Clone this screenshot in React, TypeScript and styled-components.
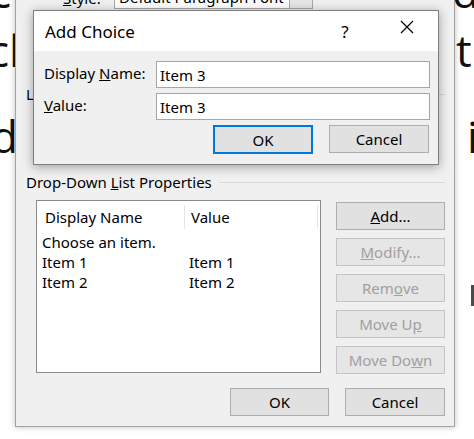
import React from 'react';
import styled, { createGlobalStyle } from 'styled-components';

const uiFont = `"Noto Sans", "Open Sans", "Liberation Sans", sans-serif`;

const GlobalStyle = createGlobalStyle`
    html, body {
        margin: 0;
        padding: 0;
        background: #fff;
    }
    * {
        box-sizing: border-box;
    }
`;

const Screen = styled.div`
    position: relative;
    width: 474px;
    height: 439px;
    overflow: hidden;
    background: #fff;
    font-family: ${uiFont};
`;

/* word document behind the dialogs */
const Document = styled.div`
    display: flex;
    flex-direction: column;
    font-family: "Open Sans", "Noto Sans", sans-serif;
    font-size: 44px;
    line-height: 44px;
    color: #111;
`;

const DocLine = styled.div<{ $gap: number }>`
    display: flex;
    justify-content: space-between;
    height: 44px;
    margin-top: ${({ $gap }) => $gap}px;
    white-space: nowrap;
`;

const DocLeft = styled.span<{ $shift: number }>`
    margin-left: ${({ $shift }) => $shift}px;
`;

const DocRight = styled.span<{ $pad: number }>`
    width: 22px;
    padding-left: ${({ $pad }) => $pad}px;
    overflow: visible;
`;

const Caret = styled.div`
    position: absolute;
    left: 471px;
    top: 285px;
    width: 3px;
    height: 21px;
    background: #4a4a4a;
`;

/* Content Control Properties dialog */
const OuterDialog = styled.div`
    position: absolute;
    left: 15px;
    top: -24px;
    width: 440px;
    height: 451px;
    display: flex;
    flex-direction: column;
    padding: 9px 9px 0 10px;
    background: #f0f0f0;
    border: 1px solid #a3a3a3;
    box-shadow: 0 0 6px rgba(0, 0, 0, 0.25);
    font-size: 15px;
    color: #000;
`;

const StyleRow = styled.div`
    display: flex;
    align-items: center;
    margin-left: 37px;
    height: 23px;
`;

const StyleLabel = styled.span`
    width: 51px;
`;

const Combo = styled.div`
    display: flex;
    width: 199px;
    height: 23px;
    background: #fff;
    border: 1px solid #a8a8a8;
`;

const ComboText = styled.span`
    flex: 1;
    padding-left: 4px;
    line-height: 21px;
    overflow: hidden;
    white-space: nowrap;
`;

const ComboButton = styled.span`
    width: 23px;
    border-left: 1px solid #a8a8a8;
    background: #e5e5e5;
    display: flex;
    align-items: center;
    justify-content: center;
`;

const GroupHeader = styled.div<{ $gap: number }>`
    display: flex;
    align-items: center;
    gap: 7px;
    height: 20px;
    margin-top: ${({ $gap }) => $gap}px;
    white-space: nowrap;
`;

const GroupLine = styled.span`
    flex: 1;
    height: 1px;
    background: #d9d9d9;
`;

const ListArea = styled.div`
    display: flex;
    margin-top: 8px;
    margin-left: 10px;
`;

const ListBox = styled.div`
    width: 285px;
    height: 173px;
    background: #fff;
    border: 1px solid #8a8a8a;
    padding-top: 4px;
`;

const ListHeader = styled.div`
    display: grid;
    grid-template-columns: 148px 133px;
    height: 24px;
    align-items: center;
    margin-bottom: 3px;
`;

const HeaderCell = styled.span<{ $pad: number }>`
    height: 100%;
    display: flex;
    align-items: center;
    padding-left: ${({ $pad }) => $pad}px;
    border-right: 1px solid #e5e5e5;
`;

const ListRow = styled.div`
    display: grid;
    grid-template-columns: 147px 1fr;
    height: 20px;
    align-items: center;
    padding-left: 5px;
`;

const Cell = styled.span`
    white-space: nowrap;
`;

const SideButtons = styled.div`
    display: flex;
    flex-direction: column;
    gap: 8px;
    margin-left: 15px;
    padding-top: 2px;
`;

const Button = styled.div<{ $w: number; $disabled?: boolean; $default?: boolean }>`
    width: ${({ $w }) => $w}px;
    height: ${({ $default }) => ($default ? 29 : 28)}px;
    display: flex;
    align-items: center;
    justify-content: center;
    background: ${({ $disabled }) => ($disabled ? '#e6e6e6' : '#e1e1e1')};
    border: ${({ $default, $disabled }) =>
        $default ? '2px solid #0078d7' : `1px solid ${$disabled ? '#c4c4c4' : '#adadad'}`};
    color: ${({ $disabled }) => ($disabled ? '#a0a0a0' : '#000')};
    font-size: 15px;
    white-space: nowrap;
`;

const Footer = styled.div`
    display: flex;
    justify-content: flex-end;
    gap: 16px;
    margin-top: 14px;
`;

/* Add Choice dialog */
const AddDialog = styled.div`
    position: absolute;
    left: 33px;
    top: 10px;
    width: 406px;
    height: 155px;
    display: flex;
    flex-direction: column;
    background: #f0f0f0;
    border: 1px solid #7d7d7d;
    box-shadow: 0 2px 10px rgba(0, 0, 0, 0.35);
    font-size: 15px;
    color: #000;
`;

const TitleBar = styled.div`
    display: flex;
    align-items: center;
    height: 40px;
    padding-left: 11px;
    padding-right: 16px;
    background: #fff;
`;

const Title = styled.span`
    flex: 1;
    font-size: 17px;
`;

const TitleButton = styled.span`
    width: 30px;
    display: flex;
    justify-content: center;
    font-size: 17px;
`;

const TitleButtons = styled.div`
    display: flex;
    gap: 32px;
`;

const Body = styled.div`
    display: flex;
    flex-direction: column;
    gap: 5px;
    padding: 10px 8px 0 10px;
`;

const FieldRow = styled.div`
    display: flex;
    align-items: flex-start;
`;

const FieldLabel = styled.span`
    width: 112px;
    padding-top: 2px;
    white-space: nowrap;
`;

const TextBox = styled.div`
    width: 274px;
    height: 27px;
    display: flex;
    align-items: center;
    padding-left: 3px;
    background: #fff;
    border: 1px solid #a6a6a6;
`;

const DialogButtons = styled.div`
    display: flex;
    justify-content: flex-end;
    align-items: flex-start;
    gap: 16px;
    margin-right: 1px;
`;

const CloseIcon = () => (
    <svg width="14" height="14" viewBox="0 0 14 14">
        <path d="M1 1 L13 13 M13 1 L1 13" stroke="#000" strokeWidth="1.2" fill="none" />
    </svg>
);

const DropArrow = () => (
    <svg width="8" height="5" viewBox="0 0 8 5">
        <path d="M0 0 L8 0 L4 5 Z" fill="#333" />
    </svg>
);

const items = [
    { name: 'Choose an item.', value: '' },
    { name: 'Item 1', value: 'Item 1' },
    { name: 'Item 2', value: 'Item 2' },
];

const App = () => {
    return (
        <Screen>
            <GlobalStyle />
            <Document>
                <DocLine $gap={-31}>
                    <DocLeft $shift={-10}>c</DocLeft>
                    <DocRight $pad={0}>d</DocRight>
                </DocLine>
                <DocLine $gap={15}>
                    <DocLeft $shift={-12}>ck</DocLeft>
                    <DocRight $pad={4}>t</DocRight>
                </DocLine>
                <DocLine $gap={42}>
                    <DocLeft $shift={-9}>do</DocLeft>
                    <DocRight $pad={15}>i</DocRight>
                </DocLine>
            </Document>
            <Caret />

            <OuterDialog>
                <StyleRow>
                    <StyleLabel><u>S</u>tyle:</StyleLabel>
                    <Combo>
                        <ComboText>Default Paragraph Font</ComboText>
                        <ComboButton><DropArrow /></ComboButton>
                    </Combo>
                </StyleRow>
                <GroupHeader $gap={75}>
                    <span>Locking</span>
                    <GroupLine />
                </GroupHeader>
                <GroupHeader $gap={68}>
                    <span>Drop-Down <u>L</u>ist Properties</span>
                    <GroupLine />
                </GroupHeader>
                <ListArea>
                    <ListBox>
                        <ListHeader>
                            <HeaderCell $pad={8}>Display Name</HeaderCell>
                            <HeaderCell $pad={6}>Value</HeaderCell>
                        </ListHeader>
                        {items.map((item) => (
                            <ListRow key={item.name}>
                                <Cell>{item.name}</Cell>
                                <Cell>{item.value}</Cell>
                            </ListRow>
                        ))}
                    </ListBox>
                    <SideButtons>
                        <Button $w={109}><u>A</u>dd...</Button>
                        <Button $w={109} $disabled><u>M</u>odify...</Button>
                        <Button $w={109} $disabled>Rem<u>o</u>ve</Button>
                        <Button $w={109} $disabled>Move U<u>p</u></Button>
                        <Button $w={109} $disabled>Move Do<u>w</u>n</Button>
                    </SideButtons>
                </ListArea>
                <Footer>
                    <Button $w={99}>OK</Button>
                    <Button $w={100}>Cancel</Button>
                </Footer>
            </OuterDialog>

            <AddDialog>
                <TitleBar>
                    <Title>Add Choice</Title>
                    <TitleButtons>
                        <TitleButton>?</TitleButton>
                        <TitleButton><CloseIcon /></TitleButton>
                    </TitleButtons>
                </TitleBar>
                <Body>
                    <FieldRow>
                        <FieldLabel>Display <u>N</u>ame:</FieldLabel>
                        <TextBox>Item 3</TextBox>
                    </FieldRow>
                    <FieldRow>
                        <FieldLabel><u>V</u>alue:</FieldLabel>
                        <TextBox>Item 3</TextBox>
                    </FieldRow>
                    <DialogButtons>
                        <Button $w={100} $default>OK</Button>
                        <Button $w={100}>Cancel</Button>
                    </DialogButtons>
                </Body>
            </AddDialog>
        </Screen>
    );
};

export default App;
